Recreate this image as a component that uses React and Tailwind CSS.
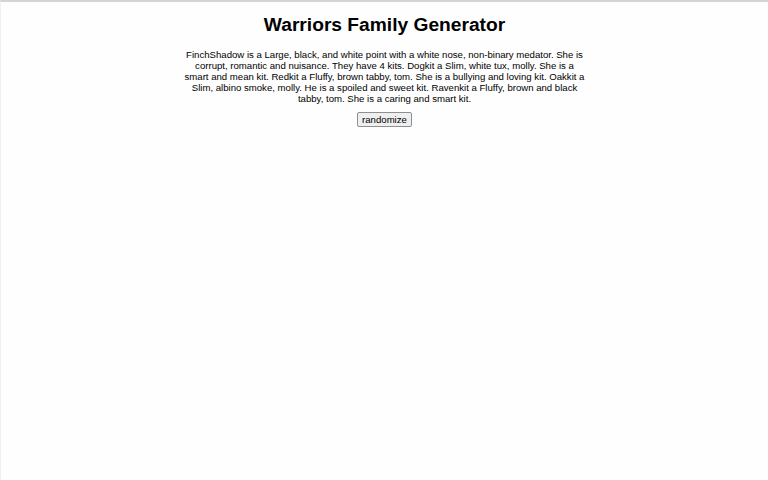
export default function App() {
  return (
    <div className="min-h-[480px] w-[768px] border-t-2 border-l border-t-[#d4d4d4] border-l-[#f0f0f0] bg-[#fefefe] font-['Liberation_Sans',Arial,sans-serif] text-black">
      <div className="flex flex-col items-center">
        <h1 className="mt-[11px] text-[19.2px] font-bold leading-[24px]">Warriors Family Generator</h1>
        <p className="mt-[12px] w-[400px] text-center text-[9.6px] leading-[11px]">
          FinchShadow is a Large, black, and white point with a white nose, non-binary medator. She is corrupt, romantic and nuisance. They have 4 kits. Dogkit a Slim, white tux, molly. She is a smart and mean kit. Redkit a Fluffy, brown tabby, tom. She is a bullying and loving kit. Oakkit a Slim, albino smoke, molly. He is a spoiled and sweet kit. Ravenkit a Fluffy, brown and black tabby, tom. She is a caring and smart kit.
        </p>
        <button className="mt-[8px] rounded-[2px] border border-[#8f8f8f] bg-[#efefef] px-[4px] text-[9.6px] leading-[13px]">
          randomize
        </button>
      </div>
    </div>
  );
}
